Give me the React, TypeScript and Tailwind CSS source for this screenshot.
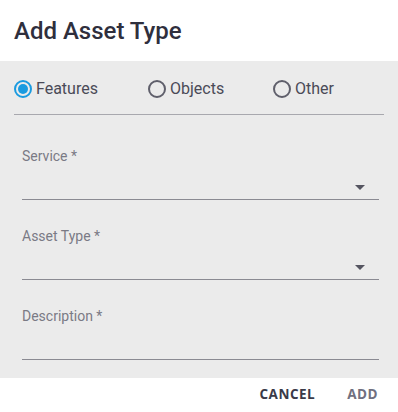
import React from "react";

function Radio({ label, checked }: { label: string; checked?: boolean }) {
  return (
    <label className="flex items-center gap-[4px]">
      <span
        className={
          "flex h-[18px] w-[18px] items-center justify-center rounded-full border-2 " +
          (checked ? "border-[#1a9be0]" : "border-[#5f5f6b]")
        }
      >
        {checked && <span className="h-[10px] w-[10px] rounded-full bg-[#1a9be0]" />}
      </span>
      <span className="text-[16px] text-[#4a4a57]">{label}</span>
    </label>
  );
}

function Field({ label, select }: { label: string; select?: boolean }) {
  return (
    <div className="flex flex-col">
      <div className="text-[14px] leading-[16px] text-[#7a7a85]">{label}</div>
      <div className="relative mt-[11px] h-[25px] border-b-[1.5px] border-[#8a8a92]">
        {select && (
          <svg
            className="absolute right-[14px] top-[10px]"
            width="10"
            height="5"
            viewBox="0 0 10 5"
          >
            <path d="M0 0 L10 0 L5 5 Z" fill="#555560" />
          </svg>
        )}
      </div>
    </div>
  );
}

export default function App() {
  return (
    <div
      className="flex h-[412px] w-[398px] flex-col bg-white"
      style={{ fontFamily: "Roboto, 'Noto Sans', sans-serif" }}
    >
      <div className="flex h-[61px] items-center px-[14px]">
        <h1 className="text-[24px] font-medium text-[#2f2f3d]">Add Asset Type</h1>
      </div>
      <div className="flex h-[317px] flex-col bg-[#ebebeb] px-[14px]">
        <div className="flex h-[54px] items-center border-b border-[#a8a8ae] pt-[2px]">
          <div className="w-[134px]">
            <Radio label="Features" checked />
          </div>
          <div className="w-[125px]">
            <Radio label="Objects" />
          </div>
          <Radio label="Other" />
        </div>
        <div className="flex flex-col gap-[28px] pl-[8px] pr-[5px] pt-[33px]">
          <Field label="Service *" select />
          <Field label="Asset Type *" select />
          <Field label="Description *" />
        </div>
      </div>
      <div
        className="flex flex-1 items-center justify-end gap-[32px] pr-[20px] pb-[2px]"
        style={{ fontFamily: "'Open Sans', sans-serif" }}
      >
        <span className="text-[13.5px] font-bold tracking-[0.5px] text-[#3a3a48]">CANCEL</span>
        <span className="text-[13.5px] font-bold tracking-[0.5px] text-[#707080]">ADD</span>
      </div>
    </div>
  );
}
